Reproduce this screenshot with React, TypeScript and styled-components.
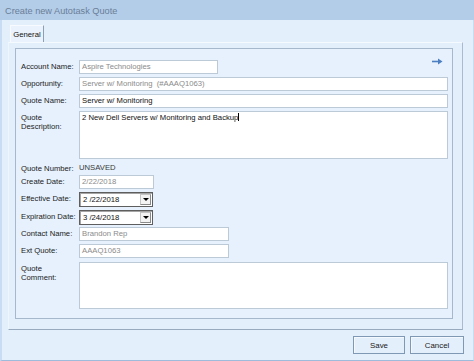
import React from "react";
import styled, { createGlobalStyle } from "styled-components";

const GlobalStyle = createGlobalStyle`
  html, body {
    margin: 0;
    padding: 0;
  }
  body {
    width: 474px;
    height: 361px;
    overflow: hidden;
    background: #e4effc;
    font-family: "Liberation Sans", Arial, sans-serif;
  }
`;

const Window = styled.div`
  width: 474px;
  height: 361px;
  box-sizing: border-box;
  display: flex;
  flex-direction: column;
  background: #e4effc;
  border-left: 2px solid #c8dcf4;
  border-right: 1px solid #c8dcf4;
  border-bottom: 1px solid #9fbbdc;
`;

const TitleBar = styled.div`
  height: 20px;
  flex: none;
  display: flex;
  align-items: center;
  box-sizing: border-box;
  margin-left: -2px;
  margin-right: -1px;
  padding: 2px 0 0 5px;
  background: #b3cde9;
  color: #6a7e97;
  font-size: 9.2px;
`;

const TabStrip = styled.div`
  height: 22px;
  flex: none;
  display: flex;
  align-items: flex-end;
  padding-left: 8px;
`;

const Tab = styled.div`
  height: 17px;
  width: 34px;
  box-sizing: border-box;
  display: flex;
  align-items: center;
  justify-content: center;
  font-size: 7.7px;
  color: #111;
  background: #eaf3fd;
  border-top: 1px solid #f7fbff;
  border-left: 1px solid #f7fbff;
  border-right: 1px solid #8d9fb3;
`;

const TabPage = styled.div`
  height: 288px;
  flex: none;
  box-sizing: border-box;
  margin: 0 10px 0 6px;
  display: flex;
  padding: 5px 9px 10px 6px;
  border-top: 1px solid #f5faff;
  border-left: 1px solid #eef5fe;
  border-right: 1px solid #a8bccf;
  border-bottom: 1px solid #97aabe;
`;

const GroupBox = styled.div`
  flex: 1;
  display: flex;
  flex-direction: column;
  padding: 11px 4px 0 5px;
  border: 1px solid #a6b8cb;
  background: #e6f1fd;
`;

const Row = styled.div<{ $h: number; $mt: number }>`
  display: grid;
  grid-template-columns: 58px 1fr;
  height: ${(p) => p.$h}px;
  margin-top: ${(p) => p.$mt}px;
  flex: none;
`;

const Label = styled.div`
  font-size: 7.7px;
  line-height: 9px;
  color: #222222;
  padding-top: 2px;
  white-space: nowrap;
`;

const FieldCell = styled.div`
  display: flex;
  align-items: flex-start;
  justify-content: space-between;
`;

const TextBox = styled.div<{ $w?: number; $dim?: boolean }>`
  width: ${(p) => (p.$w ? `${p.$w}px` : "100%")};
  height: 100%;
  box-sizing: border-box;
  background: #ffffff;
  border: 1px solid #bcc9d6;
  padding: 1px 2px;
  font-size: 7.7px;
  line-height: 10px;
  color: ${(p) => (p.$dim ? "#8b8b8b" : "#111")};
  white-space: nowrap;
  overflow: hidden;
`;

const Caret = styled.span`
  display: inline-block;
  width: 1px;
  height: 8px;
  background: #000;
  vertical-align: -1px;
`;

const PlainValue = styled.div`
  font-size: 7.7px;
  line-height: 9px;
  color: #3a3a3a;
  padding-top: 1px;
`;

const Picker = styled.div`
  width: 74px;
  height: 15px;
  box-sizing: border-box;
  background: #ffffff;
  border: 1px solid #5e5e5e;
  box-shadow: inset 1px 1px 0 #a5a5a5;
  display: flex;
  align-items: center;
  justify-content: space-between;
  padding-left: 3px;
  font-size: 7.7px;
  color: #111;
`;

const DropButton = styled.div`
  width: 11px;
  height: 11px;
  box-sizing: border-box;
  margin-right: 1px;
  background: #f3f3f3;
  border: 1px solid #c4c4c4;
  border-right-color: #8a8a8a;
  border-bottom-color: #8a8a8a;
  display: flex;
  align-items: center;
  justify-content: center;

  &::after {
    content: "";
    width: 0;
    height: 0;
    border-left: 3px solid transparent;
    border-right: 3px solid transparent;
    border-top: 3px solid #000;
  }
`;

const ArrowIcon = styled.svg`
  margin-right: 5px;
  margin-top: -2px;
`;

const Footer = styled.div`
  flex: 1;
  display: flex;
  justify-content: flex-end;
  align-items: flex-start;
  gap: 5px;
  padding: 6px 9px 0 0;
`;

const Button = styled.button<{ $w: number }>`
  width: ${(p) => p.$w}px;
  height: 18px;
  padding: 0;
  background: #e4effc;
  border: 1px solid #7f98b3;
  box-shadow: inset 1px 1px 0 #f4f9ff;
  font-family: "Liberation Sans", Arial, sans-serif;
  font-size: 7.9px;
  color: #1a1a1a;
`;

const DateField: React.FC<{ value: string }> = ({ value }) => (
  <Picker>
    <span>{value}</span>
    <DropButton />
  </Picker>
);

const App: React.FC = () => (
  <>
    <GlobalStyle />
    <Window>
      <TitleBar>Create new Autotask Quote</TitleBar>
      <TabStrip>
        <Tab>General</Tab>
      </TabStrip>
      <TabPage>
        <GroupBox>
          <Row $h={14} $mt={0}>
            <Label>Account Name:</Label>
            <FieldCell>
              <TextBox $w={139} $dim>
                Aspire Technologies
              </TextBox>
              <ArrowIcon width="11" height="7" viewBox="0 0 11 7">
                <path d="M0 3.5h7" stroke="#4b7fc1" strokeWidth="1.6" />
                <path d="M6 0.5L10.5 3.5L6 6.5Z" fill="#4b7fc1" />
              </ArrowIcon>
            </FieldCell>
          </Row>
          <Row $h={14} $mt={3}>
            <Label>Opportunity:</Label>
            <TextBox $dim>Server w/ Monitoring&nbsp; (#AAAQ1063)</TextBox>
          </Row>
          <Row $h={14} $mt={3}>
            <Label>Quote Name:</Label>
            <TextBox>Server w/ Monitoring</TextBox>
          </Row>
          <Row $h={48} $mt={3}>
            <Label>
              Quote
              <br />
              Description:
            </Label>
            <TextBox>
              2 New Dell Servers w/ Monitoring and Backup
              <Caret />
            </TextBox>
          </Row>
          <Row $h={10} $mt={3}>
            <Label>Quote Number:</Label>
            <PlainValue>UNSAVED</PlainValue>
          </Row>
          <Row $h={14} $mt={3}>
            <Label>Create Date:</Label>
            <FieldCell>
              <TextBox $w={75} $dim>
                2/22/2018
              </TextBox>
            </FieldCell>
          </Row>
          <Row $h={15} $mt={3}>
            <Label>Effective Date:</Label>
            <FieldCell>
              <DateField value="2 /22/2018" />
            </FieldCell>
          </Row>
          <Row $h={15} $mt={3}>
            <Label>Expiration Date:</Label>
            <FieldCell>
              <DateField value="3 /24/2018" />
            </FieldCell>
          </Row>
          <Row $h={14} $mt={2}>
            <Label>Contact Name:</Label>
            <FieldCell>
              <TextBox $w={150} $dim>
                Brandon Rep
              </TextBox>
            </FieldCell>
          </Row>
          <Row $h={14} $mt={3}>
            <Label>Ext Quote:</Label>
            <FieldCell>
              <TextBox $w={150} $dim>
                AAAQ1063
              </TextBox>
            </FieldCell>
          </Row>
          <Row $h={47} $mt={4}>
            <Label>
              Quote
              <br />
              Comment:
            </Label>
            <TextBox />
          </Row>
        </GroupBox>
      </TabPage>
      <Footer>
        <Button $w={52}>Save</Button>
        <Button $w={54}>Cancel</Button>
      </Footer>
    </Window>
  </>
);

export default App;
